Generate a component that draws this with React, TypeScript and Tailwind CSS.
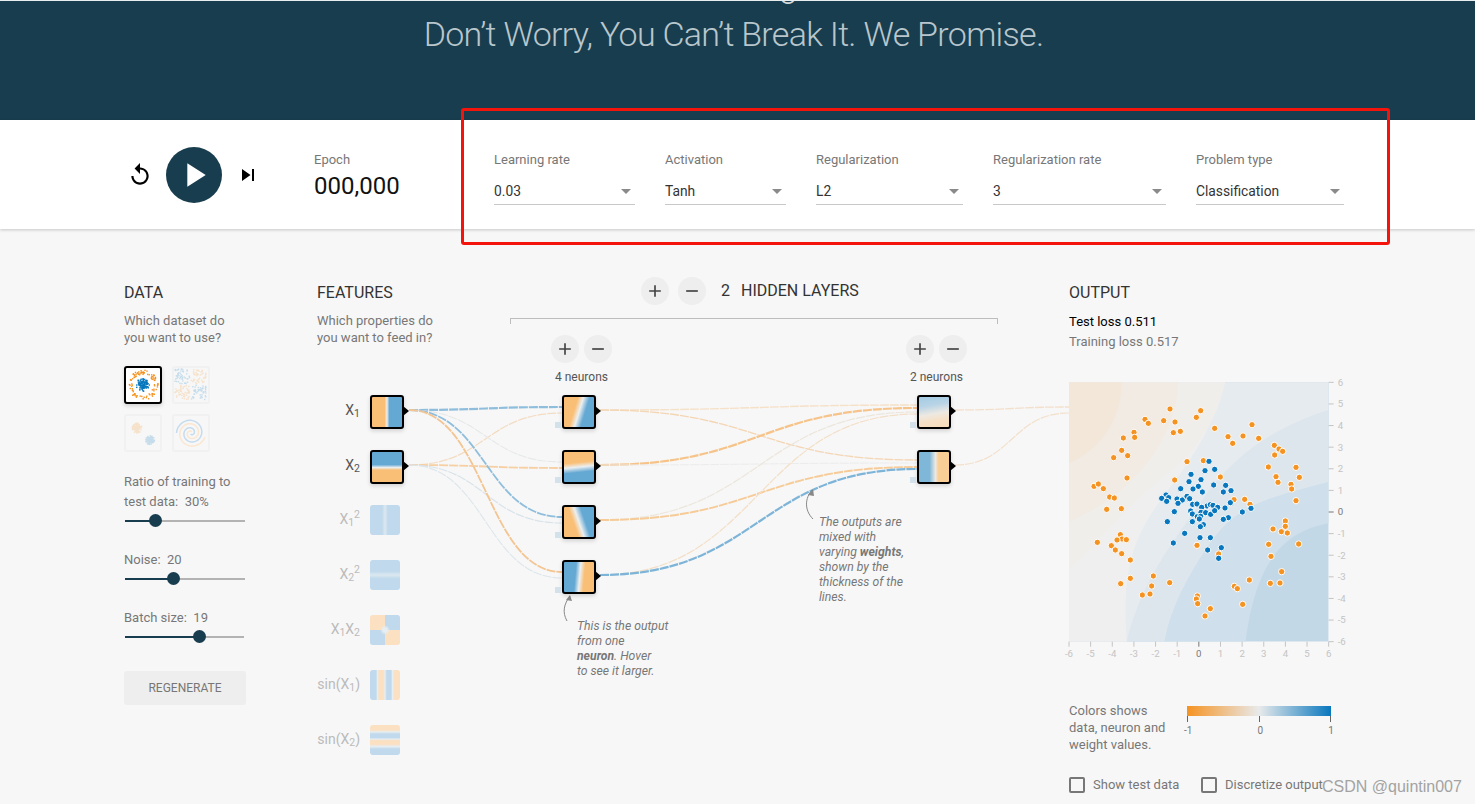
import React from 'react'
import { MdPlayArrow, MdReplay, MdSkipNext, MdAdd, MdRemove } from 'react-icons/md'

const ORANGE = [[330,117],[422,122],[409,142],[311,152],[345,156],[255,148],[265,160],[340,188],[361,184],[464,175],[576,164],[222,187],[224,202],[190,204],[504,200],[549,198],[596,205],[518,220],[185,241],[203,257],[161,263],[643,226],[657,237],[668,244],[644,255],[381,275],[430,272],[625,291],[708,292],[201,324],[344,330],[481,321],[648,320],[718,322],[654,337],[102,349],[115,342],[130,356],[693,343],[695,357],[149,381],[163,384],[522,389],[554,388],[570,403],[708,392],[140,418],[184,416],[676,453],[676,469],[639,477],[664,485],[682,489],[181,494],[186,507],[171,510],[199,509],[112,517],[154,527],[166,540],[185,551],[411,526],[626,523],[716,522],[476,552],[633,559],[211,570],[665,605],[280,618],[211,625],[182,641],[329,638],[275,648],[568,630],[631,640],[660,639],[523,649],[532,656],[247,675],[270,672],[412,678],[409,687],[413,701],[548,703],[451,716],[435,738]]
const BLUE = [[447,274],[435,302],[464,298],[393,313],[423,329],[387,335],[461,345],[497,346],[415,349],[362,356],[399,357],[427,366],[490,366],[513,362],[318,375],[305,385],[326,383],[320,394],[351,387],[367,390],[381,379],[389,386],[354,400],[398,403],[411,402],[441,408],[451,404],[459,406],[511,398],[425,412],[473,412],[495,414],[573,415],[343,425],[392,423],[397,432],[423,427],[437,428],[452,433],[464,422],[547,426],[412,440],[422,439],[418,447],[505,443],[490,448],[397,455],[322,455],[430,464],[421,470],[374,490],[420,503],[451,503],[340,519],[484,533],[443,540],[476,565]]

// small repeatable random so the dataset thumbs stay the same
const rnd = (seed: number) => {
  let s = seed
  return () => {
    s = (s * 16807) % 2147483647
    return s / 2147483647
  }
}

const makeCircle = () => {
  const r = rnd(7)
  const pts: number[][] = []
  for (let i = 0; i < 95; i++) {
    const a = r() * Math.PI * 2
    const d = 10.5 + r() * 4.5
    pts.push([17 + Math.cos(a) * d, 17 + Math.sin(a) * d, 0])
  }
  for (let i = 0; i < 110; i++) {
    const a = r() * Math.PI * 2
    const d = Math.sqrt(r()) * 7.5
    pts.push([17 + Math.cos(a) * d * (0.4 + r() * 0.6), 17 + Math.sin(a) * d * (0.4 + r() * 0.6), 1])
  }
  return pts
}

const makeXor = () => {
  const r = rnd(21)
  const pts: number[][] = []
  for (let i = 0; i < 220; i++) {
    const x = 1 + r() * 31
    const y = 1 + r() * 31
    if (Math.abs(x - 16.5) < 0.8 || Math.abs(y - 16.5) < 0.8) continue
    pts.push([x, y, (x < 16.5) === (y < 16.5) ? 1 : 0])
  }
  return pts
}

const makeGauss = () => {
  const r = rnd(99)
  const pts: number[][] = []
  for (let i = 0; i < 120; i++) {
    const a = r() * Math.PI * 2
    const d = r() * 5
    pts.push([11 + Math.cos(a) * d, 12 + Math.sin(a) * d, 0])
    const b = r() * Math.PI * 2
    const e = r() * 4.5
    pts.push([24 + Math.cos(b) * e, 24 + Math.sin(b) * e, 1])
  }
  return pts
}

const spiral = (start: number) => {
  let d = ''
  for (let i = 0; i <= 80; i++) {
    const s = i / 80
    const a = start + s * Math.PI * 3.6
    const r = 14.5 - s * 13.5
    d += `${i ? 'L' : 'M'}${(17 + Math.cos(a) * r).toFixed(2)},${(17 + Math.sin(a) * r).toFixed(2)} `
  }
  return d
}

const DataThumb = ({ pts, active }: { pts: number[][]; active?: boolean }) => (
  <div className={active ? 'w-[38px] h-[38px] border-[2px] border-black rounded-[3px] bg-white shadow-[0_2px_4px_rgba(0,0,0,0.15)]' : 'w-[38px] h-[38px] border-[2px] border-[#f1f1f1] rounded-[3px]'}>
    <svg viewBox="0 0 34 34" className={active ? 'w-[34px] h-[34px]' : 'w-[34px] h-[34px] opacity-20'}>
      {pts.map((p, i) => (
        <rect key={i} x={p[0] - 0.7} y={p[1] - 0.7} width="1.4" height="1.4" fill={p[2] ? '#0877bd' : '#f59322'} />
      ))}
    </svg>
  </div>
)

const SpiralThumb = () => (
  <div className="w-[38px] h-[38px] border-[2px] border-[#f1f1f1] rounded-[3px]">
    <svg viewBox="0 0 34 34" className="w-[34px] h-[34px]" fill="none" strokeWidth="1.5">
      <path d={spiral(Math.PI)} stroke="#c5dcee" />
      <path d={spiral(0.3)} stroke="#fbe6d0" />
    </svg>
  </div>
)

const Slider = ({ pct, end = 120 }: { pct: number; end?: number }) => (
  <div className="relative h-[13px] ml-px flex items-center" style={{ width: end }}>
    <div className="h-[2px] bg-[#183d4e]" style={{ width: pct }} />
    <div className="h-[2px] bg-[#b3b3b3] flex-1" />
    <div className="absolute top-0 w-[13px] h-[13px] rounded-full bg-[#183d4e]" style={{ left: pct - 6 }} />
  </div>
)

const Select = ({ label, value, w, gap }: { label: string; value: string; w: number; gap: number }) => (
  <div style={{ width: w, marginRight: gap }}>
    <div className="text-[13px] leading-[16px] text-[#777]">{label}</div>
    <div className="flex items-center justify-between h-[29px] pt-[2px] mt-[8px] border-b border-[#c8c8c8] text-[13.8px] text-[#333]">
      <span>{value}</span>
      <span className="w-0 h-0 border-x-[5px] border-x-transparent border-t-[5px] border-t-[#8a8a8a] mr-[4px]" />
    </div>
  </div>
)

const RoundBtn = ({ minus }: { minus?: boolean }) => (
  <button className="w-[28px] h-[28px] rounded-full bg-[#eeeeee] flex items-center justify-center text-[#444]">
    {minus ? <MdRemove size={20} /> : <MdAdd size={20} />}
  </button>
)

const Node = ({ bg, bias }: { bg: string; bias?: boolean }) => (
  <div className="relative w-[34px] h-[34px]">
    {bias && <div className="absolute left-[-7px] top-[27px] w-[6px] h-[6px] bg-[#d3e1ea]" />}
    <div className="w-[34px] h-[34px] border-[2px] border-black rounded-[3px] shadow-[0_2px_4px_rgba(0,0,0,0.15)]" style={{ background: bg }} />
    <div className="absolute left-[33px] top-[11px] w-0 h-0 border-y-[5px] border-y-transparent border-l-[6px] border-l-black" />
  </div>
)

const O = '#fabf76'
const B = '#64a8d4'
const W = '#eceff0'

const G_X1 = `linear-gradient(90deg, ${O} 0%, ${O} 42%, ${W} 50%, ${B} 58%, ${B} 100%)`
const G_X2 = `linear-gradient(180deg, ${B} 0%, ${B} 42%, ${W} 52%, ${O} 60%, ${O} 100%)`

const LB = '#c0d9ec'
const LO = '#fbe0c2'
const LW = '#e6eef2'

const features = [
  { label: <>X<sub>1</sub><sup>2</sup></>, bg: `linear-gradient(90deg, ${LB} 0%, ${LB} 40%, #dce8f0 50%, ${LB} 60%, ${LB} 100%)` },
  { label: <>X<sub>2</sub><sup>2</sup></>, bg: `linear-gradient(180deg, ${LB} 0%, ${LB} 38%, #dce8f0 50%, ${LB} 62%, ${LB} 100%)` },
  { label: <>X<sub>1</sub>X<sub>2</sub></>, bg: `radial-gradient(circle at center, ${LW} 0px, ${LW} 2px, transparent 5px), conic-gradient(${LB} 0deg 90deg, ${LO} 90deg 180deg, ${LB} 180deg 270deg, ${LO} 270deg 360deg)` },
  { label: <>sin(X<sub>1</sub>)</>, bg: `linear-gradient(90deg, ${LB} 0%, ${LB} 20%, ${LW} 25%, ${LO} 30%, ${LO} 44%, ${LW} 50%, ${LB} 56%, ${LB} 70%, ${LW} 75%, ${LO} 82%, ${LO} 100%)` },
  { label: <>sin(X<sub>2</sub>)</>, bg: `linear-gradient(180deg, ${LO} 0%, ${LO} 17%, ${LW} 23%, ${LB} 30%, ${LB} 42%, ${LW} 47%, ${LO} 52%, ${LO} 64%, ${LW} 72%, ${LB} 80%, ${LB} 100%)` },
]

const link = (x1: number, y1: number, x2: number, y2: number) => {
  const m = (x1 + x2) / 2
  return `M${x1},${y1} C${m},${y1} ${m},${y2} ${x2},${y2}`
}

const links: [number, number, number, number, string, number][] = [
  [409, 410, 562, 407, '#8fbedd', 2.2],
  [409, 465, 562, 413, '#f3dcc3', 1.2],
  [409, 410, 562, 462, '#e6e8e8', 1.1],
  [409, 465, 562, 468, '#f6cfa2', 1.8],
  [409, 410, 562, 517, '#8fbedd', 1.8],
  [409, 465, 562, 523, '#d9e3ea', 1.2],
  [409, 410, 562, 572, '#f3c592', 1.8],
  [409, 465, 562, 578, '#dde6eb', 1.1],
  [600, 410, 917, 405, '#f5e0c8', 1.4],
  [600, 410, 917, 460, '#f4d5b4', 1.3],
  [600, 465, 917, 408, '#f6c48a', 2.2],
  [600, 465, 917, 463, '#ececec', 1],
  [600, 520, 917, 412, '#ece6dc', 1.2],
  [600, 520, 917, 467, '#f6cb98', 1.9],
  [600, 575, 917, 414, '#f3dfc7', 1.2],
  [600, 575, 917, 469, '#7db4d8', 2.2],
  [955, 410, 1069, 407, '#f3e0cb', 1.3],
  [955, 465, 1069, 413, '#f3e0cb', 1.2],
]

const ticks = [-6, -5, -4, -3, -2, -1, 0, 1, 2, 3, 4, 5, 6]

const OutputPlot = () => (
  <svg viewBox="0 0 900 900" className="w-[300px] h-[300px] ml-[-9px] mt-[18px]">
    <defs>
      <clipPath id="plot">
        <rect x="27" y="37" width="779" height="778" />
      </clipPath>
    </defs>
    <g clipPath="url(#plot)">
      <rect x="27" y="37" width="779" height="778" fill="#c2d8e7" />
      <path d="M27,37 L806,37 L806,460 C700,480 590,540 557,815 L27,815 Z" fill="#cfdfeb" />
      <path d="M27,37 L806,37 L806,335 C640,380 530,400 450,520 C380,620 330,720 313,815 L27,815 Z" fill="#dde6ed" />
      <path d="M27,37 L806,37 L806,120 C650,170 520,250 420,400 C320,540 240,650 200,815 L27,815 Z" fill="#e6ebef" />
      <path d="M27,37 L495,37 C470,150 400,260 340,340 C250,460 180,540 200,815 L27,815 Z" fill="#efefef" />
      <path d="M27,37 L495,37 C470,150 410,250 300,330 C210,400 110,520 27,600 Z" fill="#f0eeea" />
      <path d="M27,37 L355,37 C350,200 230,370 27,455 Z" fill="#f1ebe3" />
      <path d="M27,37 L185,37 C185,150 120,240 27,280 Z" fill="#f3e7da" />
    </g>
    {ORANGE.map((p, i) => (
      <circle key={i} cx={p[0]} cy={p[1]} r="9.5" fill="#f59322" stroke="#fff" strokeWidth="3" />
    ))}
    {BLUE.map((p, i) => (
      <circle key={i} cx={p[0]} cy={p[1]} r="9.5" fill="#0877bd" stroke="#fff" strokeWidth="3" />
    ))}
    {ticks.map((t) => {
      const x = 27 + ((t + 6) / 12) * 779
      const y = 815 - ((t + 6) / 12) * 778
      const c = t === 0 ? '#777' : '#c4c4c4'
      return (
        <g key={t}>
          <line x1={x} y1="815" x2={x} y2="830" stroke={c} strokeWidth="3" />
          <line x1="806" y1={y} x2="821" y2={y} stroke={c} strokeWidth="3" />
          <text x={x} y="862" textAnchor="middle" fontSize="29" fill={c}>{t}</text>
          <text x="833" y={y + 10} fontSize="29" fill={c}>{t}</text>
        </g>
      )
    })}
  </svg>
)

const circlePts = makeCircle()
const xorPts = makeXor()
const gaussPts = makeGauss()

export default function App() {
  return (
    <div className="relative w-[1475px] h-[804px] overflow-hidden bg-[#f7f7f7] font-['Roboto',sans-serif]">
      <header className="h-[120px] bg-[#183d4e] border-t border-[#e8edef] overflow-hidden text-center pr-[8px]">
        <div className="text-[34px] leading-[44px] font-light tracking-[-0.7px] text-[#d3dadd] mt-[-38px] whitespace-nowrap">Tinker With a Neural Network Right Here in Your Browser.</div>
        <h1 className="text-[34px] leading-[44px] font-light tracking-[-0.7px] text-[#b9c6cc] mt-[5px]">Don’t Worry, You Can’t Break It. We Promise.</h1>
      </header>

      <section className="relative h-[109px] bg-white shadow-[0_1px_3px_rgba(0,0,0,0.2)] flex items-center pl-[127px]">
        <MdReplay size={26} className="text-black" />
        <div className="ml-[13px] w-[56px] h-[56px] rounded-full bg-[#183d4e] flex items-center justify-center">
          <MdPlayArrow size={40} className="text-white" />
        </div>
        <MdSkipNext size={24} className="ml-[14px] text-black" />
        <div className="ml-[54px] w-[180px] pt-[4px]">
          <div className="text-[13px] leading-[16px] text-[#777]">Epoch</div>
          <div className="text-[24px] leading-[30px] mt-[3px] text-[#111]">000,000</div>
        </div>
        <div className="flex pt-[8px]">
          <Select label="Learning rate" value="0.03" w={141} gap={30} />
          <Select label="Activation" value="Tanh" w={121} gap={30} />
          <Select label="Regularization" value="L2" w={147} gap={30} />
          <Select label="Regularization rate" value="3" w={173} gap={30} />
          <Select label="Problem type" value="Classification" w={148} gap={0} />
        </div>
      </section>

      <main className="relative flex pl-[124px] pt-[54px]">
        <svg viewBox="0 229 1475 575" className="absolute left-0 top-0 w-[1475px] h-[575px] pointer-events-none" fill="none">
          {links.map((l, i) => (
            <path key={i} d={link(l[0], l[1], l[2], l[3])} stroke={l[4]} strokeWidth={l[5]} strokeDasharray="9 1" />
          ))}
          <path d="M570,596 C564,604 562,612 567,621" stroke="#888" strokeWidth="1" />
          <path d="M566,600 L570,595 L572,601 Z" fill="#888" />
          <path d="M812,490 C805,498 804,510 813,519" stroke="#888" strokeWidth="1" />
          <path d="M808,495 L813,489 L814,496 Z" fill="#888" />
        </svg>

        <div className="relative w-[193px] shrink-0">
          <h2 className="text-[16px] leading-[20px] text-[#333]">DATA</h2>
          <p className="text-[13px] leading-[17px] text-[#777] mt-[9px]">Which dataset do<br />you want to use?</p>
          <div className="grid grid-cols-[38px_38px] gap-x-[10px] gap-y-[10px] mt-[20px]">
            <DataThumb pts={circlePts} active />
            <DataThumb pts={xorPts} />
            <DataThumb pts={gaussPts} />
            <SpiralThumb />
          </div>
          <p className="text-[13px] leading-[20px] text-[#777] mt-[20px]">Ratio of training to<br />test data:&nbsp; 30%</p>
          <div className="mt-[2px]"><Slider pct={30} /></div>
          <p className="text-[13px] leading-[20px] text-[#777] mt-[23px]">Noise:&nbsp; 20</p>
          <div className="mt-[2px]"><Slider pct={48} /></div>
          <p className="text-[13px] leading-[20px] text-[#777] mt-[23px]">Batch size:&nbsp; 19</p>
          <div className="mt-[2px]"><Slider pct={74} end={119} /></div>
          <button className="block w-[122px] h-[34px] mt-[28px] bg-[#eeeeee] rounded-[3px] text-[12px] text-[#777]">REGENERATE</button>
        </div>

        <div className="relative w-[193px] shrink-0">
          <h2 className="text-[16px] leading-[20px] text-[#333]">FEATURES</h2>
          <p className="text-[13px] leading-[17px] text-[#777] mt-[9px]">Which properties do<br />you want to feed in?</p>
          <div className="mt-[49px] flex flex-col gap-[21px] w-[87px]">
            <div className="flex items-center justify-end gap-[10px]">
              <span className="text-[14px] text-[#555] leading-none mt-[-5px]">X<sub>1</sub></span>
              <Node bg={G_X1} />
            </div>
            <div className="flex items-center justify-end gap-[10px]">
              <span className="text-[14px] text-[#555] leading-none mt-[-5px]">X<sub>2</sub></span>
              <Node bg={G_X2} />
            </div>
          </div>
          <div className="flex flex-col gap-[25px] mt-[21px] w-[83px]">
            {features.map((f, i) => (
              <div key={i} className="flex items-center justify-end gap-[10px]">
                <span className="text-[14px] text-[#bbb] leading-none whitespace-nowrap mt-[-3px]">{f.label}</span>
                <div className="w-[30px] h-[30px] rounded-[3px]" style={{ background: f.bg }} />
              </div>
            ))}
          </div>
        </div>

        <div className="relative w-[559px] shrink-0">
          <div className="flex items-center h-[30px] mt-[-7px] ml-[131px]">
            <RoundBtn />
            <div className="w-[9px]" />
            <RoundBtn minus />
            <span className="ml-[15px] text-[16px] text-[#333]">2</span>
            <span className="ml-[11px] text-[16px] text-[#333]">HIDDEN LAYERS</span>
          </div>
          <div className="w-[488px] h-[6px] mt-[12px] border-x border-t border-[#bdbdbd]" />
          <div className="flex mt-[11px] ml-[41px]">
            <div className="w-[61px] mr-[294px] flex flex-col items-start">
              <div className="flex gap-[5px]"><RoundBtn /><RoundBtn minus /></div>
              <div className="w-[61px] text-center text-[12px] text-[#555] leading-[14px] mt-[7px]">4 neurons</div>
              <div className="ml-[11px] mt-[11px] flex flex-col gap-[21px]">
                <Node bias bg="linear-gradient(107deg, #fabf76 0%, #fabf76 36%, #eceff0 50%, #64a8d4 66%, #64a8d4 100%)" />
                <Node bias bg="linear-gradient(174deg, #fabf76 0%, #fabf76 36%, #eceff0 50%, #64a8d4 66%, #64a8d4 100%)" />
                <Node bias bg="linear-gradient(71deg, #fabf76 0%, #fabf76 36%, #eceff0 50%, #64a8d4 66%, #64a8d4 100%)" />
                <Node bias bg="linear-gradient(95deg, #64a8d4 0%, #64a8d4 38%, #eceff0 52%, #fabf76 66%, #fabf76 100%)" />
              </div>
              <p className="absolute left-[67px] top-[336px] w-[110px] text-[12.2px] leading-[15px] italic text-[#777]">This is the output<br />from one<br /><b>neuron</b>. Hover<br />to see it larger.</p>
            </div>
            <div className="w-[61px] flex flex-col items-start">
              <div className="flex gap-[5px]"><RoundBtn /><RoundBtn minus /></div>
              <div className="w-[61px] text-center text-[12px] text-[#555] leading-[14px] mt-[7px]">2 neurons</div>
              <div className="ml-[11px] mt-[11px] flex flex-col gap-[21px]">
                <Node bias bg="linear-gradient(170deg, #a3cbe3 0%, #b9d4e6 30%, #ede9e2 55%, #f6e0c6 75%, #f6dcbc 100%)" />
                <Node bias bg="linear-gradient(90deg, #7fb7d9 0%, #7fb7d9 35%, #ece9e4 55%, #f8cd96 65%, #f8cd96 100%)" />
              </div>
            </div>
            <p className="absolute left-[309px] top-[232px] w-[100px] text-[12.2px] leading-[15px] italic text-[#777]">The outputs are<br />mixed with<br />varying <b>weights</b>,<br />shown by the<br />thickness of the<br />lines.</p>
          </div>
        </div>

        <div className="relative w-[300px] shrink-0">
          <h2 className="text-[16px] leading-[20px] text-[#333]">OUTPUT</h2>
          <div className="text-[13px] leading-[20px] text-black mt-[9px]">Test loss 0.511</div>
          <div className="text-[13px] leading-[20px] text-[#777]">Training loss 0.517</div>
          <OutputPlot />
          <div className="flex mt-[32px]">
            <p className="w-[118px] text-[13px] leading-[17px] text-[#777]">Colors shows<br />data, neuron and<br />weight values.</p>
            <div className="w-[144px] mt-[4px]">
              <div className="h-[10px] bg-[linear-gradient(90deg,#f59322,#e8eaeb_50%,#0877bd)]" />
              <div className="flex justify-between h-[6px]">
                <i className="w-px bg-[#666]" /><i className="w-px bg-[#666]" /><i className="w-px bg-[#666]" />
              </div>
              <div className="flex justify-between text-[10px] leading-[12px] text-[#777] mt-[3px] mx-[-3px]">
                <span>-1</span><span>0</span><span>1</span>
              </div>
            </div>
          </div>
          <div className="flex items-center mt-[22px] text-[13px] text-[#777]">
            <span className="w-[16px] h-[16px] border-[2px] border-[#777] rounded-[2px]" />
            <span className="ml-[8px] w-[108px]">Show test data</span>
            <span className="w-[16px] h-[16px] border-[2px] border-[#777] rounded-[2px]" />
            <span className="ml-[8px] whitespace-nowrap">Discretize output</span>
          </div>
        </div>
      </main>

      <div className="absolute left-[461px] top-[108px] w-[929px] h-[137px] border-[3px] border-[#f5140c] rounded-[3px] pointer-events-none" />
      <div className="absolute left-[1322px] top-[777px] text-[16px] leading-[20px] text-[#a3a3a3] font-['Liberation_Sans',sans-serif] whitespace-nowrap">CSDN @quintin007</div>
    </div>
  )
}
